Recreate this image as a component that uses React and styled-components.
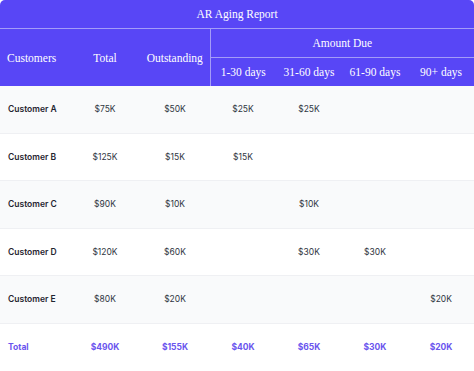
import * as React from "react";
import styled, { createGlobalStyle } from "styled-components";

const GlobalStyle = createGlobalStyle`
  html, body {
    margin: 0;
    padding: 0;
    background: #ffffff;
  }
`;

const ReportContainer = styled.div`
  width: 474px;
  height: 371px;
  overflow: hidden;
  border-radius: 5px 5px 0 0;
  background: #ffffff;
`;

const Table = styled.table`
  width: 474px;
  border-collapse: collapse;
  table-layout: fixed;
`;

const TitleCell = styled.th`
  background: #5846f6;
  color: #ffffff;
  font-family: "Liberation Serif", serif;
  font-weight: 500;
  font-size: 11.5px;
  height: 28px;
  padding: 0;
  text-align: center;
  border-bottom: 1px solid #a49cf8;
`;

const HeadCell = styled.th`
  background: #5846f6;
  color: #ffffff;
  font-family: "Liberation Serif", serif;
  font-weight: 500;
  font-size: 11.5px;
  height: 28px;
  padding: ${(p) => (p.$left ? "0 0 0 7px" : "0")};
  text-align: ${(p) => (p.$left ? "left" : "center")};
  border-left: ${(p) => (p.$divider ? "1px solid #a49cf8" : "none")};
  border-bottom: ${(p) => (p.$underline ? "1px solid #a49cf8" : "none")};
`;

const Row = styled.tr`
  background: ${(p) => (p.$striped ? "#f9fafb" : "#ffffff")};
  border-bottom: 1px solid #eff0f3;
`;

const Cell = styled.td`
  height: 46.5px;
  padding: ${(p) => (p.$left ? "0 0 0 8px" : "0")};
  text-align: ${(p) => (p.$left ? "left" : "center")};
  font-family: Inter, "Noto Sans", sans-serif;
  font-size: 8.5px;
  font-weight: ${(p) => (p.$total ? 700 : p.$left ? 600 : 400)};
  color: ${(p) => (p.$total ? "#6a55ee" : p.$left ? "#1f2430" : "#2f3642")};
`;

const TotalRow = styled.tr`
  background: #ffffff;
`;

const ageColumns = ["1-30 days", "31-60 days", "61-90 days", "90+ days"];

const customers = [
  { name: "Customer A", total: "$75K", outstanding: "$50K", due: ["$25K", "$25K", "", ""] },
  { name: "Customer B", total: "$125K", outstanding: "$15K", due: ["$15K", "", "", ""] },
  { name: "Customer C", total: "$90K", outstanding: "$10K", due: ["", "$10K", "", ""] },
  { name: "Customer D", total: "$120K", outstanding: "$60K", due: ["", "$30K", "$30K", ""] },
  { name: "Customer E", total: "$80K", outstanding: "$20K", due: ["", "", "", "$20K"] }
];

const totals = { total: "$490K", outstanding: "$155K", due: ["$40K", "$65K", "$30K", "$20K"] };

export default function App() {
  return (
    <>
      <GlobalStyle />
      <ReportContainer>
        <Table>
          <colgroup>
            <col style={{ width: 70 }} />
            <col style={{ width: 70 }} />
            <col style={{ width: 70 }} />
            <col style={{ width: 66 }} />
            <col style={{ width: 66 }} />
            <col style={{ width: 66 }} />
            <col style={{ width: 66 }} />
          </colgroup>
          <thead>
            <tr>
              <TitleCell colSpan={7}>AR Aging Report</TitleCell>
            </tr>
            <tr>
              <HeadCell rowSpan={2} $left>Customers</HeadCell>
              <HeadCell rowSpan={2}>Total</HeadCell>
              <HeadCell rowSpan={2}>Outstanding</HeadCell>
              <HeadCell colSpan={4} $divider $underline>Amount Due</HeadCell>
            </tr>
            <tr>
              {ageColumns.map((label, i) => (
                <HeadCell key={label} $divider={i === 0}>{label}</HeadCell>
              ))}
            </tr>
          </thead>
          <tbody>
            {customers.map((c, i) => (
              <Row key={c.name} $striped={i % 2 === 0}>
                <Cell $left>{c.name}</Cell>
                <Cell>{c.total}</Cell>
                <Cell>{c.outstanding}</Cell>
                {c.due.map((d, j) => (
                  <Cell key={j}>{d}</Cell>
                ))}
              </Row>
            ))}
            <TotalRow>
              <Cell $left $total>Total</Cell>
              <Cell $total>{totals.total}</Cell>
              <Cell $total>{totals.outstanding}</Cell>
              {totals.due.map((d, j) => (
                <Cell key={j} $total>{d}</Cell>
              ))}
            </TotalRow>
          </tbody>
        </Table>
      </ReportContainer>
    </>
  );
}
